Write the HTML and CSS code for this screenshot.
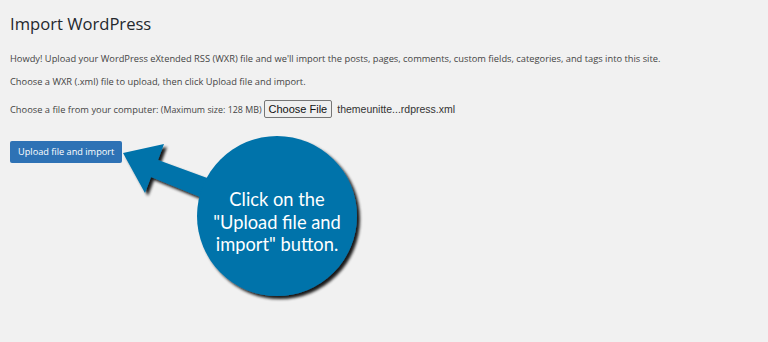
FILE: index.html
```html
<!DOCTYPE html>
<html>
<head>
<meta charset="utf-8">
<link rel="stylesheet" href="styles.css">
</head>
<body>
<div class="wrap">
  <h1 class="title">Import WordPress</h1>
  <p class="line l1">Howdy! Upload your WordPress eXtended RSS (WXR) file and we'll import the posts, pages, comments, custom fields, categories, and tags into this site.</p>
  <p class="line l2">Choose a WXR (.xml) file to upload, then click Upload file and import.</p>
  <p class="line l3">Choose a file from your computer: <span class="max">(Maximum size: 128 MB)</span><span class="choose">Choose File</span><span class="fname">themeunitte...rdpress.xml</span></p>
  <div class="submit"><span class="btn">Upload file and import</span></div>
</div>
<div class="callout">
  <svg class="arrow" width="768" height="342" viewBox="0 0 768 342">
    <defs>
      <filter id="sh" x="-20%" y="-20%" width="140%" height="140%">
        <feGaussianBlur in="SourceAlpha" stdDeviation="1.4"/>
        <feOffset dx="3" dy="3" result="b"/>
        <feComponentTransfer><feFuncA type="linear" slope="0.9"/></feComponentTransfer>
        <feMerge><feMergeNode/><feMergeNode in="SourceGraphic"/></feMerge>
      </filter>
    </defs>
    <polygon filter="url(#sh)" fill="#0073aa" points="123,153 164,144 158,160 240,190 232,210 151,177 145,193"/>
    <circle filter="url(#sh)" cx="277" cy="216" r="80" fill="#0073aa"/>
  </svg>
  <div class="bubble">Click on the<br>"Upload file and<br>import" button.</div>
</div>
</body>
</html>
```
FILE: styles.css
```css
html, body {
  margin: 0;
  padding: 0;
  background: #f1f1f1;
  width: 768px;
  height: 342px;
  overflow: hidden;
}
.wrap {
  padding: 12px 10px 0 10px;
  font-family: "Open Sans", "Noto Sans", sans-serif;
  color: #444;
}
.title {
  margin: 0;
  font-weight: 400;
  font-size: 16.6px;
  line-height: 24px;
  color: #23282d;
}
.line {
  margin: 0;
  font-size: 9.3px;
  line-height: 13px;
}
.l1 { margin-top: 16px; }
.l2 { margin-top: 10px; }
.l3 {
  margin-top: 12px;
  display: flex;
  align-items: center;
  white-space: pre;
}
.max { font-size: 8.9px; }
.choose {
  font-family: "Liberation Sans", Arial, sans-serif;
  font-size: 11px;
  color: #111;
  background: #efefef;
  border: 1px solid #767676;
  border-radius: 2px;
  padding: 1px 4px;
  margin-left: 2px;
  line-height: 14px;
}
.fname {
  font-family: "Liberation Sans", Arial, sans-serif;
  font-size: 10.5px;
  color: #333;
  margin-left: 5px;
}
.submit { margin-top: 20px; }
.btn {
  display: inline-block;
  background: #2e72b5;
  color: #fff;
  font-size: 9.2px;
  line-height: 22px;
  height: 22px;
  padding: 0 8px;
  border-radius: 2px;
}
.callout {
  position: absolute;
  left: 0;
  top: 0;
  width: 768px;
  height: 342px;
}
.arrow { position: absolute; left: 0; top: 0; }
.bubble {
  position: absolute;
  left: 197px;
  top: 188px;
  width: 160px;
  text-align: center;
  color: #fff;
  font-family: "Lato", "Open Sans", sans-serif;
  font-size: 18.3px;
  line-height: 22.5px;
}
```
